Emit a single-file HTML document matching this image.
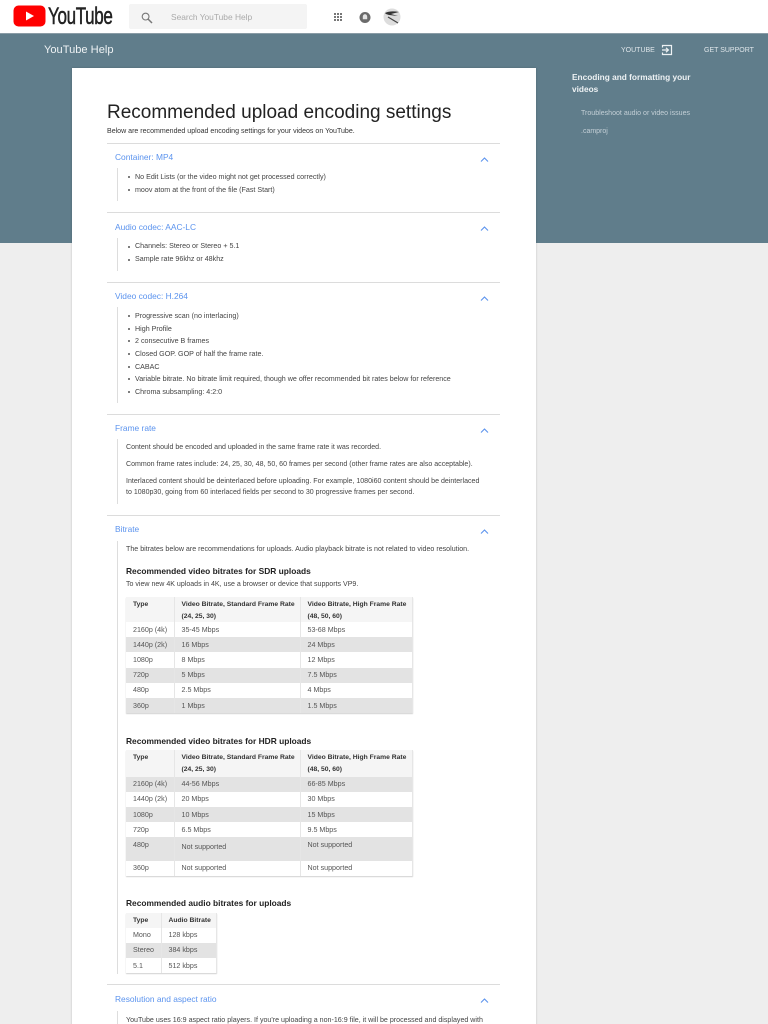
<!DOCTYPE html>
<html style="height:1024px;overflow:hidden"><head><meta charset="utf-8"><style>
html,body{margin:0;padding:0}
body{width:768px;height:1024px;position:relative;overflow:hidden;background:#eee;font-family:"Liberation Sans",sans-serif;color:#3c3c3c;font-size:7px}
#o{position:absolute;left:0;top:0;width:768px;height:1024px;overflow:hidden}
#w{position:absolute;left:-10px;top:-10px;width:790px;height:1050px;filter:blur(.3px);background:#eee}
#i{position:absolute;left:10px;top:10px;width:768px;height:1024px}
.a,.t,.h,.l,.b,.hr,.v,.bu{position:absolute;white-space:nowrap}
.t{line-height:10px;font-size:7.13px;color:#444;margin-top:1px}
.n{font-size:7.05px}
.h{line-height:10px;font-size:8.4px;color:#5b93ee}
.b{line-height:10px;font-size:8.4px;font-weight:bold;color:#222}
.hr{left:107px;width:393px;height:1px;background:#dcdcdc}
.v{left:117px;width:1px;background:#ddd}
.bu{left:128px;width:2px;height:2px;border-radius:50%;background:#555;margin-top:1px}
.c{position:absolute;left:480px;width:9px;height:5px}
.tb{position:absolute;left:126px;border-collapse:collapse;table-layout:fixed;font-size:7.13px;color:#555;box-shadow:0 1px 1px rgba(0,0,0,.18)}
.tb td,.tb th{padding:0 0 0 7px;text-align:left;vertical-align:middle;border-right:1px solid #e6e6e6;height:15.2px;line-height:12px;overflow:hidden;white-space:nowrap}
.tb th{background:#f5f5f5;color:#333;font-weight:bold;font-size:6.75px;vertical-align:top;padding-top:2px;height:12.7px}
.tb tr.g td{background:#e3e3e3}
.tb tr td{background:#fff}
.tb td.p{height:21.4px;padding-top:2px;vertical-align:top}
.tb td.q{height:19.9px;padding-top:3.5px;vertical-align:top}
.s th{height:23px;line-height:11.5px}
</style></head><body><div id="o"><div id="w"><div id="i">
<div class="a" style="left:0;top:-10px;width:778px;height:43px;background:#fff"></div>
<div class="a" style="left:0;top:33px;width:778px;height:210px;background:#607d8b;border-top:1px solid #8a9ca6;box-sizing:border-box"></div>
<svg class="a" style="left:13px;top:5px" width="33" height="22" viewBox="0 0 33 22"><rect x="0.5" y="0.5" width="32" height="21" rx="5" fill="#f00"/><path d="M13 6.5L21 11L13 15.5Z" fill="#fff"/></svg>
<div class="a" style="left:48px;top:4px;font-size:24px;line-height:26px;color:#222;transform-origin:0 0;transform:scaleX(.71);letter-spacing:-.5px;font-weight:normal;-webkit-text-stroke:.5px #222">YouTube</div>
<div class="a" style="left:129px;top:4px;width:178px;height:25px;background:#f4f4f4;border-radius:2px"></div>
<svg class="a" style="left:141px;top:12px" width="12" height="12" viewBox="0 0 12 12"><circle cx="4.6" cy="4.6" r="3.4" fill="none" stroke="#777" stroke-width="1.1"/><path d="M7 7L11 11" stroke="#777" stroke-width="1.5"/></svg>
<div class="a" style="left:171px;top:12px;font-size:8.4px;line-height:10px;color:#aaa">Search YouTube Help</div>
<svg class="a" style="left:333px;top:12px" width="10" height="10" viewBox="0 0 10 10" fill="#777"><rect x="1" y="1" width="2" height="2"/><rect x="4" y="1" width="2" height="2"/><rect x="7" y="1" width="2" height="2"/><rect x="1" y="4" width="2" height="2"/><rect x="4" y="4" width="2" height="2"/><rect x="7" y="4" width="2" height="2"/><rect x="1" y="7" width="2" height="2"/><rect x="4" y="7" width="2" height="2"/><rect x="7" y="7" width="2" height="2"/></svg>
<svg class="a" style="left:359px;top:11px" width="12" height="13" viewBox="0 0 12 13"><circle cx="6" cy="6.5" r="5.5" fill="#6b6b6b"/><path d="M6 3.2C7.6 3.2 8.2 4.5 8.2 6V8.2H3.8V6C3.8 4.5 4.4 3.2 6 3.2Z" fill="#e4e4e4"/></svg>
<svg class="a" style="left:383px;top:8px" width="18" height="18" viewBox="0 0 18 18"><circle cx="9" cy="9" r="8.5" fill="#ddd"/><path d="M2 5C6 3 11 3 16 4L8 6L15 8L6 7L3 6Z" fill="#333"/><path d="M5 9L15 15" stroke="#444" stroke-width="1.2"/></svg>

<div class="a" style="left:44px;top:44px;font-size:11.1px;line-height:13px;color:#eef2f4">YouTube Help</div>
<div class="a" style="left:621px;top:46px;font-size:7px;line-height:9px;color:#dfe6ea">YOUTUBE</div>
<svg class="a" style="left:661px;top:44px" width="12" height="12" viewBox="0 0 12 12" fill="none" stroke="#eef2f4" stroke-width="1.2"><path d="M1.5 3.5V1.5H10.5V10.5H1.5V8.5"/><path d="M1 6H7M5 3.8L7.4 6L5 8.2"/></svg>
<div class="a" style="left:704px;top:46px;font-size:7px;line-height:9px;color:#dfe6ea">GET SUPPORT</div>
<div class="a" style="left:572px;top:71px;font-size:8.3px;line-height:12px;font-weight:bold;color:#eef2f4;white-space:normal;width:130px">Encoding and formatting your videos</div>
<div class="a" style="left:581px;top:109px;font-size:7.05px;line-height:10px;color:#c3cfd6">Troubleshoot audio or video issues</div>
<div class="a" style="left:581px;top:127px;font-size:7px;line-height:10px;color:#c3cfd6">.camproj</div>

<div class="a" style="left:72px;top:68px;width:464px;height:980px;background:#fff;box-shadow:0 0 2px rgba(0,0,0,.2)"></div>
<div class="a" style="left:107px;top:101px;font-size:19px;line-height:24px;color:#222">Recommended upload encoding settings</div>
<div class="t n" style="left:107px;top:126px;color:#333">Below are recommended upload encoding settings for your videos on YouTube.</div>

<div class="hr" style="top:143px"></div>
<div class="h" style="left:115px;top:152px">Container: MP4</div>
<svg class="c" style="top:157px" viewBox="0 0 9 5"><path d="M1 4.5L4.5 1L8 4.5" fill="none" stroke="#5b93ee" stroke-width="1.1"/></svg>
<div class="v" style="top:168px;height:33px"></div>
<div class="bu" style="top:175px"></div><div class="t" style="left:135px;top:171px">No Edit Lists (or the video might not get processed correctly)</div>
<div class="bu" style="top:188px"></div><div class="t" style="left:135px;top:184px">moov atom at the front of the file (Fast Start)</div>

<div class="hr" style="top:212px"></div>
<div class="h" style="left:115px;top:222px">Audio codec: AAC-LC</div>
<svg class="c" style="top:226px" viewBox="0 0 9 5"><path d="M1 4.5L4.5 1L8 4.5" fill="none" stroke="#5b93ee" stroke-width="1.1"/></svg>
<div class="v" style="top:238px;height:33px"></div>
<div class="bu" style="top:245px"></div><div class="t" style="left:135px;top:240px">Channels: Stereo or Stereo + 5.1</div>
<div class="bu" style="top:258px"></div><div class="t" style="left:135px;top:253px">Sample rate 96khz or 48khz</div>

<div class="hr" style="top:282px"></div>
<div class="h" style="left:115px;top:291px">Video codec: H.264</div>
<svg class="c" style="top:296px" viewBox="0 0 9 5"><path d="M1 4.5L4.5 1L8 4.5" fill="none" stroke="#5b93ee" stroke-width="1.1"/></svg>
<div class="v" style="top:307px;height:96px"></div>
<div class="bu" style="top:314px"></div><div class="t" style="left:135px;top:310px">Progressive scan (no interlacing)</div>
<div class="bu" style="top:327px"></div><div class="t" style="left:135px;top:323px">High Profile</div>
<div class="bu" style="top:339px"></div><div class="t" style="left:135px;top:335px">2 consecutive B frames</div>
<div class="bu" style="top:352px"></div><div class="t" style="left:135px;top:348px">Closed GOP. GOP of half the frame rate.</div>
<div class="bu" style="top:365px"></div><div class="t" style="left:135px;top:361px">CABAC</div>
<div class="bu" style="top:377px"></div><div class="t" style="left:135px;top:373px">Variable bitrate. No bitrate limit required, though we offer recommended bit rates below for reference</div>
<div class="bu" style="top:390px"></div><div class="t" style="left:135px;top:386px">Chroma subsampling: 4:2:0</div>

<div class="hr" style="top:414px"></div>
<div class="h" style="left:115px;top:423px">Frame rate</div>
<svg class="c" style="top:428px" viewBox="0 0 9 5"><path d="M1 4.5L4.5 1L8 4.5" fill="none" stroke="#5b93ee" stroke-width="1.1"/></svg>
<div class="v" style="top:439px;height:65px"></div>
<div class="t n" style="left:126px;top:442px">Content should be encoded and uploaded in the same frame rate it was recorded.</div>
<div class="t n" style="left:126px;top:459px">Common frame rates include: 24, 25, 30, 48, 50, 60 frames per second (other frame rates are also acceptable).</div>
<div class="t n" style="left:126px;top:476px">Interlaced content should be deinterlaced before uploading. For example, 1080i60 content should be deinterlaced</div>
<div class="t n" style="left:126px;top:487px">to 1080p30, going from 60 interlaced fields per second to 30 progressive frames per second.</div>

<div class="hr" style="top:515px"></div>
<div class="h" style="left:115px;top:524px">Bitrate</div>
<svg class="c" style="top:529px" viewBox="0 0 9 5"><path d="M1 4.5L4.5 1L8 4.5" fill="none" stroke="#5b93ee" stroke-width="1.1"/></svg>
<div class="v" style="top:541px;height:433px"></div>
<div class="t" style="left:126px;top:543px;font-size:7.1px">The bitrates below are recommendations for uploads. Audio playback bitrate is not related to video resolution.</div>
<div class="b" style="left:126px;top:566px">Recommended video bitrates for SDR uploads</div>
<div class="t n" style="left:126px;top:579px">To view new 4K uploads in 4K, use a browser or device that supports VP9.</div>

<table class="tb s" style="top:597px;width:286px"><colgroup><col style="width:48px"><col style="width:126px"><col style="width:112px"></colgroup>
<tr><th>Type</th><th>Video Bitrate, Standard Frame Rate<br>(24, 25, 30)</th><th>Video Bitrate, High Frame Rate<br>(48, 50, 60)</th></tr>
<tr><td>2160p (4k)</td><td>35-45 Mbps</td><td>53-68 Mbps</td></tr>
<tr class="g"><td>1440p (2k)</td><td>16 Mbps</td><td>24 Mbps</td></tr>
<tr><td>1080p</td><td>8 Mbps</td><td>12 Mbps</td></tr>
<tr class="g"><td>720p</td><td>5 Mbps</td><td>7.5 Mbps</td></tr>
<tr><td>480p</td><td>2.5 Mbps</td><td>4 Mbps</td></tr>
<tr class="g"><td>360p</td><td>1 Mbps</td><td>1.5 Mbps</td></tr></table>

<div class="b" style="left:126px;top:736px">Recommended video bitrates for HDR uploads</div>
<table class="tb" style="top:750px;width:286px"><colgroup><col style="width:48px"><col style="width:126px"><col style="width:112px"></colgroup>
<tr><th style="height:24.7px">Type</th><th style="height:24.7px">Video Bitrate, Standard Frame Rate<br>(24, 25, 30)</th><th style="height:24.7px">Video Bitrate, High Frame Rate<br>(48, 50, 60)</th></tr>
<tr class="g"><td>2160p (4k)</td><td>44-56 Mbps</td><td>66-85 Mbps</td></tr>
<tr><td>1440p (2k)</td><td>20 Mbps</td><td>30 Mbps</td></tr>
<tr class="g"><td>1080p</td><td>10 Mbps</td><td>15 Mbps</td></tr>
<tr><td>720p</td><td>6.5 Mbps</td><td>9.5 Mbps</td></tr>
<tr class="g"><td class="p">480p</td><td class="q">Not supported</td><td class="p">Not supported</td></tr>
<tr><td>360p</td><td>Not supported</td><td>Not supported</td></tr></table>

<div class="b" style="left:126px;top:898px">Recommended audio bitrates for uploads</div>
<table class="tb" style="top:913px;width:90px"><colgroup><col style="width:35px"><col style="width:55px"></colgroup>
<tr><th>Type</th><th>Audio Bitrate</th></tr>
<tr><td>Mono</td><td>128 kbps</td></tr>
<tr class="g"><td>Stereo</td><td>384 kbps</td></tr>
<tr><td>5.1</td><td>512 kbps</td></tr></table>

<div class="hr" style="top:984px"></div>
<div class="h" style="left:115px;top:994px">Resolution and aspect ratio</div>
<svg class="c" style="top:998px" viewBox="0 0 9 5"><path d="M1 4.5L4.5 1L8 4.5" fill="none" stroke="#5b93ee" stroke-width="1.1"/></svg>
<div class="v" style="top:1011px;height:25px"></div>
<div class="t" style="left:126px;top:1014px;font-size:7.1px">YouTube uses 16:9 aspect ratio players. If you're uploading a non-16:9 file, it will be processed and displayed with</div>
</div></div></div></body></html>
